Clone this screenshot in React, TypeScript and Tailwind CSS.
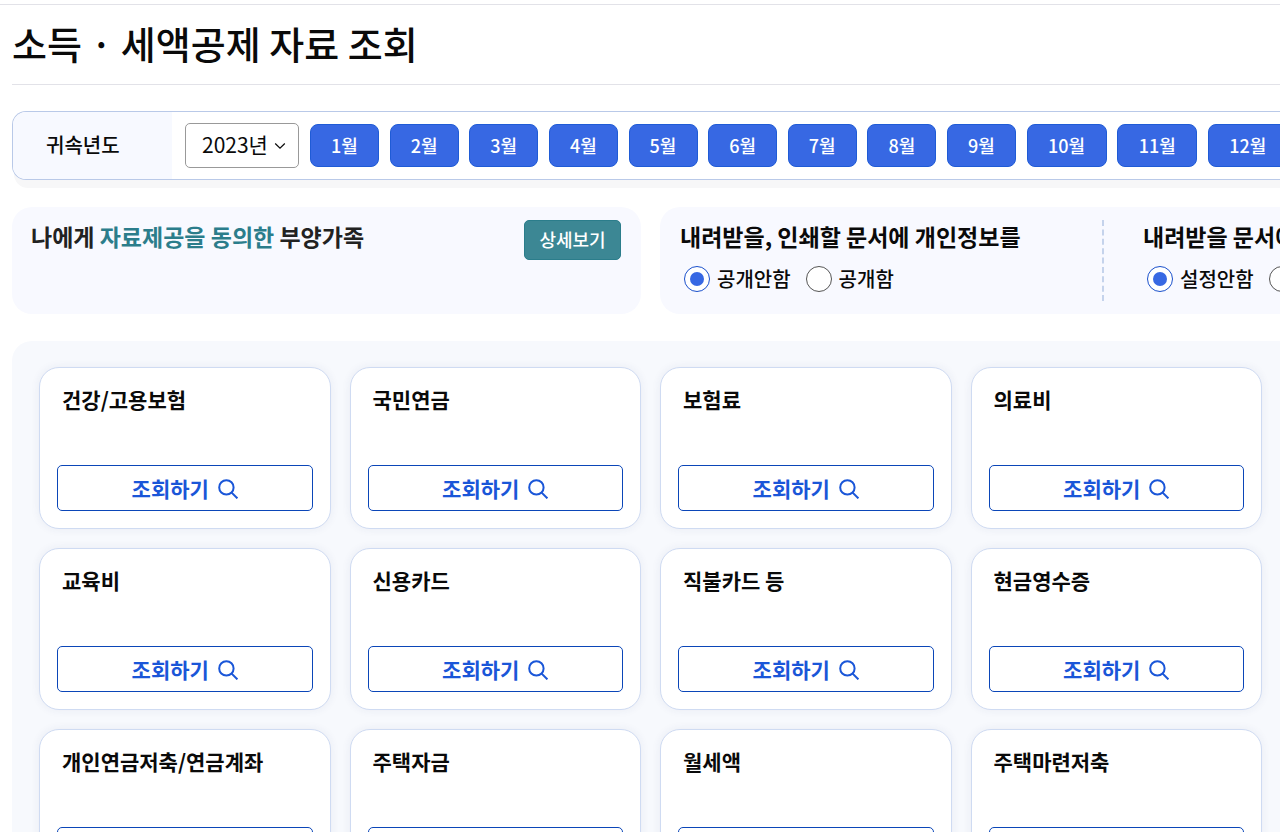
import { useState } from "react";

const shortMonths = ["1월", "2월", "3월", "4월", "5월", "6월", "7월", "8월", "9월"];
const longMonths = ["10월", "11월", "12월"];

const categories = [
  "건강/고용보험",
  "국민연금",
  "보험료",
  "의료비",
  "교육비",
  "신용카드",
  "직불카드 등",
  "현금영수증",
  "개인연금저축/연금계좌",
  "주택자금",
  "월세액",
  "주택마련저축",
];

function ChevronIcon() {
  return (
    <svg viewBox="0 0 12 8" fill="none" stroke="currentColor" strokeWidth="1.2" aria-hidden="true" className="pointer-events-none absolute top-[19px] right-[13px] h-2 w-3">
      <path d="M1.2 1.5 6 6.2l4.8-4.7" />
    </svg>
  );
}

function SearchIcon() {
  return (
    <svg viewBox="0 0 20 20" fill="none" stroke="currentColor" strokeWidth="2" aria-hidden="true" className="mt-[2px] size-5">
      <circle cx="8.4" cy="8.4" r="7.2" />
      <path d="m13.4 13.4 6 6" />
    </svg>
  );
}

function MonthButton({ label, long = false }: { label: string; long?: boolean }) {
  return (
    <button
      type="button"
      className={`${long ? "w-20" : "w-[69px]"} h-[43px] shrink-0 rounded-lg border border-[#1f5bd6] bg-[#3768e3] pb-[2px] text-lg leading-none font-medium text-white`}
    >
      {label}
    </button>
  );
}

type RadioProps = { name: string; label: string; checked: boolean; onSelect: () => void };

function Radio({ name, label, checked, onSelect }: RadioProps) {
  return (
    <label className="flex shrink-0 items-center gap-[7px] text-xl leading-7 font-medium">
      <input
        type="radio"
        name={name}
        checked={checked}
        onChange={onSelect}
        className="grid size-[26px] shrink-0 appearance-none place-content-center rounded-full border border-[#555] bg-white before:size-[14px] before:rounded-full checked:border-[#1a50cc] checked:before:bg-[#3768e3]"
      />
      {label}
    </label>
  );
}

function RadioGroup({ title, name, options }: { title: string; name: string; options: string[] }) {
  const [value, setValue] = useState(options[0]);
  return (
    <fieldset className="min-w-0 whitespace-nowrap">
      <legend className="text-[23px] leading-8 font-bold">{title}</legend>
      <div className="mt-[13px] flex gap-[15px] pl-1">
        {options.map((option) => (
          <Radio key={option} name={name} label={option} checked={value === option} onSelect={() => setValue(option)} />
        ))}
      </div>
    </fieldset>
  );
}

function CategoryCard({ title }: { title: string }) {
  return (
    <article className="flex h-[162px] flex-col justify-between rounded-[20px] border border-[#cfdbf2] bg-white px-[17px] pt-[15px] pb-[17px] shadow-[0_0_10px_rgba(40,60,110,0.07)]">
      <h2 className="pl-[5px] text-[21px] leading-8 font-bold">{title}</h2>
      <button
        type="button"
        className="flex h-[46px] items-center justify-center gap-[9px] rounded-[5px] border border-[#0b46b8] bg-white text-[21px] leading-none font-bold text-[#1a56d8]"
      >
        조회하기
        <SearchIcon />
      </button>
    </article>
  );
}

export default function App() {
  return (
    <main className="h-screen overflow-hidden bg-white pt-1 font-['Noto_Sans_CJK_KR',sans-serif] text-[#0a0a0a]">
      <div className="border-t border-[#e2e2e8] pl-3">
        <h1 className="flex h-20 items-center border-b border-[#e2e2e8] pb-1 text-[38px] leading-none font-medium">
          소득 · 세액공제 자료 조회
        </h1>

        <section className="mt-[26px] flex h-[69px] rounded-l-[14px] border border-r-0 border-[#b9c9e8] bg-white shadow-[2px_8px_0_#f7f7f8]">
          <label htmlFor="year" className="flex w-[159px] shrink-0 items-center rounded-l-[13px] bg-[#f7f9ff] pb-[1px] pl-[33px] text-xl leading-none font-medium">
            귀속년도
          </label>
          <div className="flex min-w-0 flex-1 items-center gap-[11px] pl-[13px]">
            <div className="relative shrink-0">
              <select id="year" defaultValue="2023" className="h-[45px] w-[114px] appearance-none rounded-[5px] border border-[#999] bg-white pb-[2px] pl-4 text-[21px]">
                <option value="2023">2023년</option>
              </select>
              <ChevronIcon />
            </div>
            <div className="-mr-2 flex min-w-0 flex-1 justify-between">
              {shortMonths.map((month) => (
                <MonthButton key={month} label={month} />
              ))}
              {longMonths.map((month) => (
                <MonthButton key={month} label={month} long />
              ))}
            </div>
          </div>
        </section>

        <div className="mt-[27px] -mr-[9px] grid grid-cols-2 gap-[19px]">
          <section className="flex h-[107px] items-start justify-between rounded-[20px] bg-[#f8f9ff] py-[13px] pr-5 pl-[19px]">
            <h2 className="text-[23px] leading-8 font-bold text-[#222]">
              나에게 <span className="text-[#2b7d8b]">자료제공을 동의한</span> 부양가족
            </h2>
            <button type="button" className="h-10 w-[97px] rounded-[5px] border border-[#2b7d8b] bg-[#3c8794] pb-[2px] text-lg leading-none font-medium text-white">
              상세보기
            </button>
          </section>
          <section className="flex h-[107px] min-w-0 overflow-hidden rounded-l-[20px] bg-[#f8f9ff] py-[13px] pl-5">
            <div className="w-[424px] shrink-0 border-r-2 border-dashed border-[#c5d3ec]">
              <RadioGroup title="내려받을, 인쇄할 문서에 개인정보를" name="privacy" options={["공개안함", "공개함"]} />
            </div>
            <div className="shrink-0 pl-[39px]">
              <RadioGroup title="내려받을 문서에" name="password" options={["설정안함", "설정함"]} />
            </div>
          </section>
        </div>

        <section className="mt-[27px] grid grid-cols-4 gap-[19px] rounded-tl-[20px] bg-[#f7f9fd] pt-[26px] pr-[18px] pb-[26px] pl-[27px]">
          {categories.map((title) => (
            <CategoryCard key={title} title={title} />
          ))}
        </section>
      </div>
    </main>
  );
}
